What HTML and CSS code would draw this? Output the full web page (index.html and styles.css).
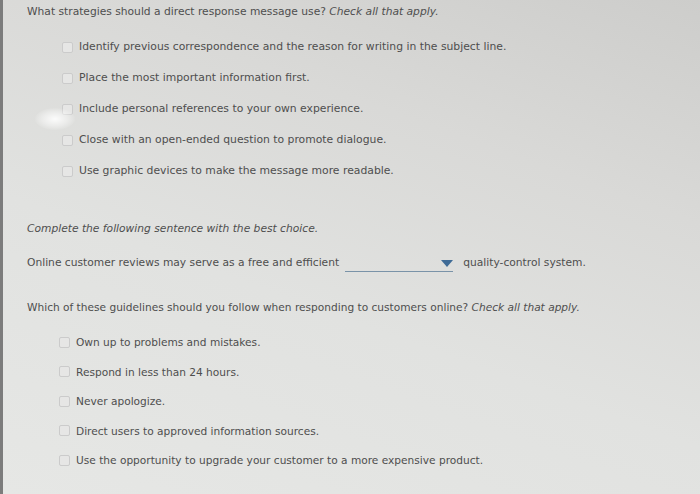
FILE: index.html
```html
<!DOCTYPE html>
<html>
<head>
<meta charset="utf-8">
<link rel="stylesheet" href="styles.css">
</head>
<body>
<div class="screen">
  <div class="glare"></div>
  <section class="q q1">
    <p class="prompt">What strategies should a direct response message use? <em>Check all that apply.</em></p>
    <ul class="opts opts1">
      <li><span class="box"></span>Identify previous correspondence and the reason for writing in the subject line.</li>
      <li><span class="box"></span>Place the most important information first.</li>
      <li><span class="box"></span>Include personal references to your own experience.</li>
      <li><span class="box"></span>Close with an open-ended question to promote dialogue.</li>
      <li><span class="box"></span>Use graphic devices to make the message more readable.</li>
    </ul>
  </section>
  <section class="q q2">
    <p class="instr"><em>Complete the following sentence with the best choice.</em></p>
    <p class="sentence">Online customer reviews may serve as a free and efficient <span class="select"><span class="arrow"></span></span> quality-control system.</p>
  </section>
  <section class="q q3">
    <p class="prompt prompt3">Which of these guidelines should you follow when responding to customers online? <em>Check all that apply.</em></p>
    <ul class="opts opts2">
      <li><span class="box"></span>Own up to problems and mistakes.</li>
      <li><span class="box"></span>Respond in less than 24 hours.</li>
      <li><span class="box"></span>Never apologize.</li>
      <li><span class="box"></span>Direct users to approved information sources.</li>
      <li><span class="box"></span>Use the opportunity to upgrade your customer to a more expensive product.</li>
    </ul>
  </section>
</div>
</body>
</html>
```
FILE: styles.css
```css
html, body {
  margin: 0;
  padding: 0;
}
body {
  width: 700px;
  height: 494px;
  overflow: hidden;
  font-family: "DejaVu Sans", Verdana, sans-serif;
  color: #4e4e4e;
}
.screen {
  position: relative;
  box-sizing: border-box;
  width: 700px;
  height: 494px;
  border-left: 3px solid #7c7c7c;
  background: linear-gradient(200deg, #cdcdcb 0%, #d9d9d7 30%, #e1e2e0 60%, #e6e7e5 100%);
  padding: 5px 0 0 24px;
}
.glare {
  position: absolute;
  left: 32px;
  top: 108px;
  width: 40px;
  height: 22px;
  border-radius: 50%;
  background: radial-gradient(ellipse at center, rgba(255,255,255,0.9) 0%, rgba(255,255,255,0.4) 45%, rgba(255,255,255,0) 75%);
}
p { margin: 0; }
em { font-style: italic; }
.prompt, .instr, .sentence {
  font-size: 10.7px;
  line-height: 14px;
}
.prompt3 {
  font-size: 10.6px;
}
.opts {
  list-style: none;
  margin: 0;
  padding: 0;
}
.opts li {
  display: flex;
  align-items: center;
  font-size: 10.8px;
  line-height: 14px;
}
.opts2 li {
  font-size: 10.6px;
}
.box {
  width: 9px;
  height: 9px;
  border: 1px solid #cbcbcb;
  border-radius: 2px;
  background: #e6e6e5;
  margin-right: 6px;
  flex: none;
}
.opts1 {
  padding: 21px 0 0 35px;
  display: flex;
  flex-direction: column;
  gap: 17px;
}
.q2 {
  padding-top: 44px;
}
.sentence {
  margin-top: 19px;
  display: flex;
  align-items: center;
}
.select {
  display: inline-block;
  position: relative;
  width: 108px;
  height: 14px;
  border-bottom: 1px solid #7a93a8;
  margin: 0 10px 0 6px;
  top: 2px;
}
.arrow {
  position: absolute;
  right: 0;
  top: 3px;
  width: 0;
  height: 0;
  border-left: 6px solid transparent;
  border-right: 6px solid transparent;
  border-top: 7px solid #3f6b96;
}
.q3 {
  padding-top: 30px;
}
.opts2 {
  padding: 21px 0 0 32px;
  display: flex;
  flex-direction: column;
  gap: 15.5px;
}
```
